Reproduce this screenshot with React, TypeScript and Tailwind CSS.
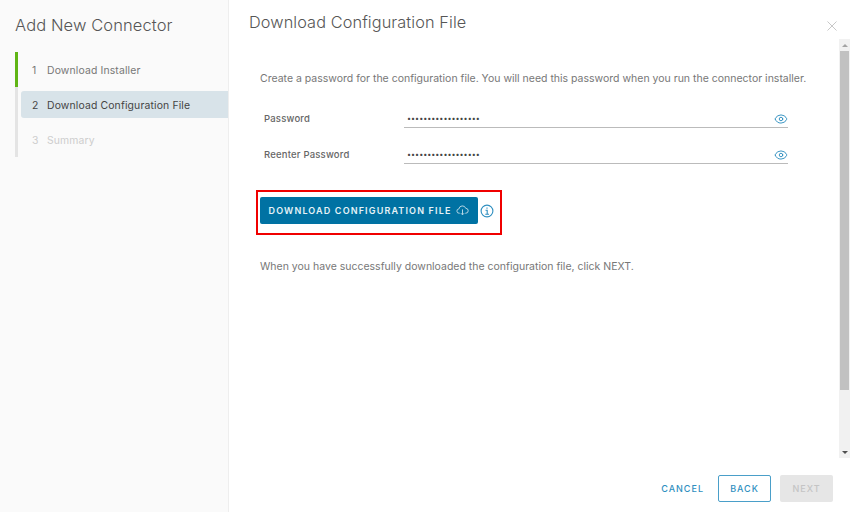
import { Eye } from "lucide-react"

const font = { fontFamily: "Inter, 'Liberation Sans', sans-serif" }

const steps = [
  { n: 1, label: "Download Installer", row: "text-[#777]" },
  { n: 2, label: "Download Configuration File", row: "text-[#444]" },
  { n: 3, label: "Summary", row: "text-[#cdcdcd]" },
]

function PasswordRow({ label }: { label: string }) {
  return (
    <div className="flex items-start h-[36px]">
      <label className="w-[144px] pl-[4px] pt-[4px] text-[9.5px] leading-[16px] font-medium tracking-[0.2px] text-[#666]">{label}</label>
      <div className="w-[384px] h-[21px] border-b border-[#bbbbbb] flex items-center justify-between pl-[3px]">
        <span className="pt-[3px] text-[7.2px] leading-[16px] text-[#444]">••••••••••••••••••</span>
        <Eye size={14} strokeWidth={1.6} className="text-[#2f8fc0] -mb-[4px]" />
      </div>
    </div>
  )
}

export default function App() {
  return (
    <div className="flex w-[850px] h-[512px] bg-white overflow-hidden" style={font}>
      <aside className="w-[229px] shrink-0 bg-[#fafafa] border-r border-[#eeeeee] pl-[15px]">
        <h2 className="pt-[15px] h-[52px] text-[16.5px] leading-[21px] font-light text-[#565656] tracking-[0.1px]">Add New Connector</h2>
        <div className="relative flex flex-col border-l-[3px] border-[#e4e4e4]">
          <div className="absolute -left-[3px] top-0 w-[3px] h-[35px] bg-[#60b515]" />
          {steps.map((s, i) => (
            <div key={s.n} className={`flex items-center h-[27px] ml-[3px] pl-[11px] pt-[2px] text-[10.4px] tracking-[0.15px] rounded-l-[3px] ${s.row} ${i === 1 ? "bg-[#d8e3e9]" : ""} ${i === 0 ? "mt-[4px] mb-[8px]" : ""} ${i === 2 ? "mt-[8px] mb-[4px]" : ""}`}>
              <span className="w-[15px]">{s.n}</span>
              <span>{s.label}</span>
            </div>
          ))}
        </div>
      </aside>

      <section className="flex-1 flex flex-col min-w-0">
        <header className="h-[39px] flex items-start justify-between pl-[20px] pr-[12px]">
          <h1 className="pt-[12px] text-[16.3px] leading-[21px] font-light text-[#565656] tracking-[0.1px]">Download Configuration File</h1>
          <svg width="12" height="12" viewBox="0 0 12 12" className="mt-[20px] text-[#c8c8c8]" fill="none" stroke="currentColor" strokeWidth="1">
            <path d="M1.500 1.500 L10.500 10.500 M10.500 1.500 L1.500 10.500" />
          </svg>
        </header>

        <div className="flex h-[419px]">
          <div className="flex-1 pl-[31px] pt-[32px]">
            <p className="text-[10.5px] leading-[16px] text-[#777] whitespace-nowrap">Create a password for the configuration file. You will need this password when you run the connector installer.</p>
            <div className="mt-[20px]">
              <PasswordRow label="Password" />
              <PasswordRow label="Reenter Password" />
            </div>
            <div className="mt-[11px] -ml-[4px] w-[246px] h-[45px] border-2 border-[#f00000] flex items-start pt-[5px] pl-[2px] gap-[2px]">
              <button className="w-[218px] h-[27px] bg-[#0072a3] rounded-[2px] flex items-center justify-center gap-[5px] text-[#e6f2f7] text-[9px] font-semibold tracking-[1.15px]">
                DOWNLOAD CONFIGURATION FILE
                <svg width="13" height="13" viewBox="0 0 24 24" fill="none" stroke="currentColor" strokeWidth="1.800" className="opacity-80">
                  <path d="M7 17 H6 a4 4 0 0 1 -.6 -8 a6.500 6.500 0 0 1 12.600 -1 a4.500 4.500 0 0 1 0 9 h-1" />
                  <path d="M12 10 v10 M9 17 l3 3 l3 -3" />
                </svg>
              </button>
              <svg width="14" height="14" viewBox="0 0 14 14" fill="none" stroke="#2f8fc0" strokeWidth="1.100" className="mt-[7px]">
                <circle cx="7" cy="7" r="5.900" />
                <path d="M5.500 6.200 H7.200 V10.300 M5.300 10.300 H9 M7 3.500 v1.200" />
              </svg>
            </div>
            <p className="mt-[24px] text-[10.5px] leading-[16px] text-[#777]">When you have successfully downloaded the configuration file, click NEXT.</p>
          </div>

          <div className="w-[11px] shrink-0 bg-[#f1f1f1] flex flex-col items-center">
            <div className="h-[12px] flex items-center justify-center">
              <div className="w-0 h-0 border-x-[3px] border-x-transparent border-b-[3px] border-b-[#a3a3a3]" />
            </div>
            <div className="w-[9px] h-[339px] bg-[#c1c1c1]" />
            <div className="flex-1" />
            <div className="h-[12px] flex items-center justify-center">
              <div className="w-0 h-0 border-x-[3px] border-x-transparent border-t-[3px] border-t-[#505050]" />
            </div>
          </div>
        </div>

        <footer className="flex-1 flex items-start justify-end pt-[17px] pr-[17px] text-[9px] font-medium tracking-[1px]">
          <button className="h-[27px] px-[14px] text-[#2f8fc0]">CANCEL</button>
          <button className="h-[27px] w-[53px] border border-[#4a9fc9] rounded-[2px] text-[#2f8fc0]">BACK</button>
          <button className="h-[27px] w-[53px] ml-[9px] bg-[#e6e6e6] rounded-[2px] text-[#c4c4c4]">NEXT</button>
        </footer>
      </section>
    </div>
  )
}
